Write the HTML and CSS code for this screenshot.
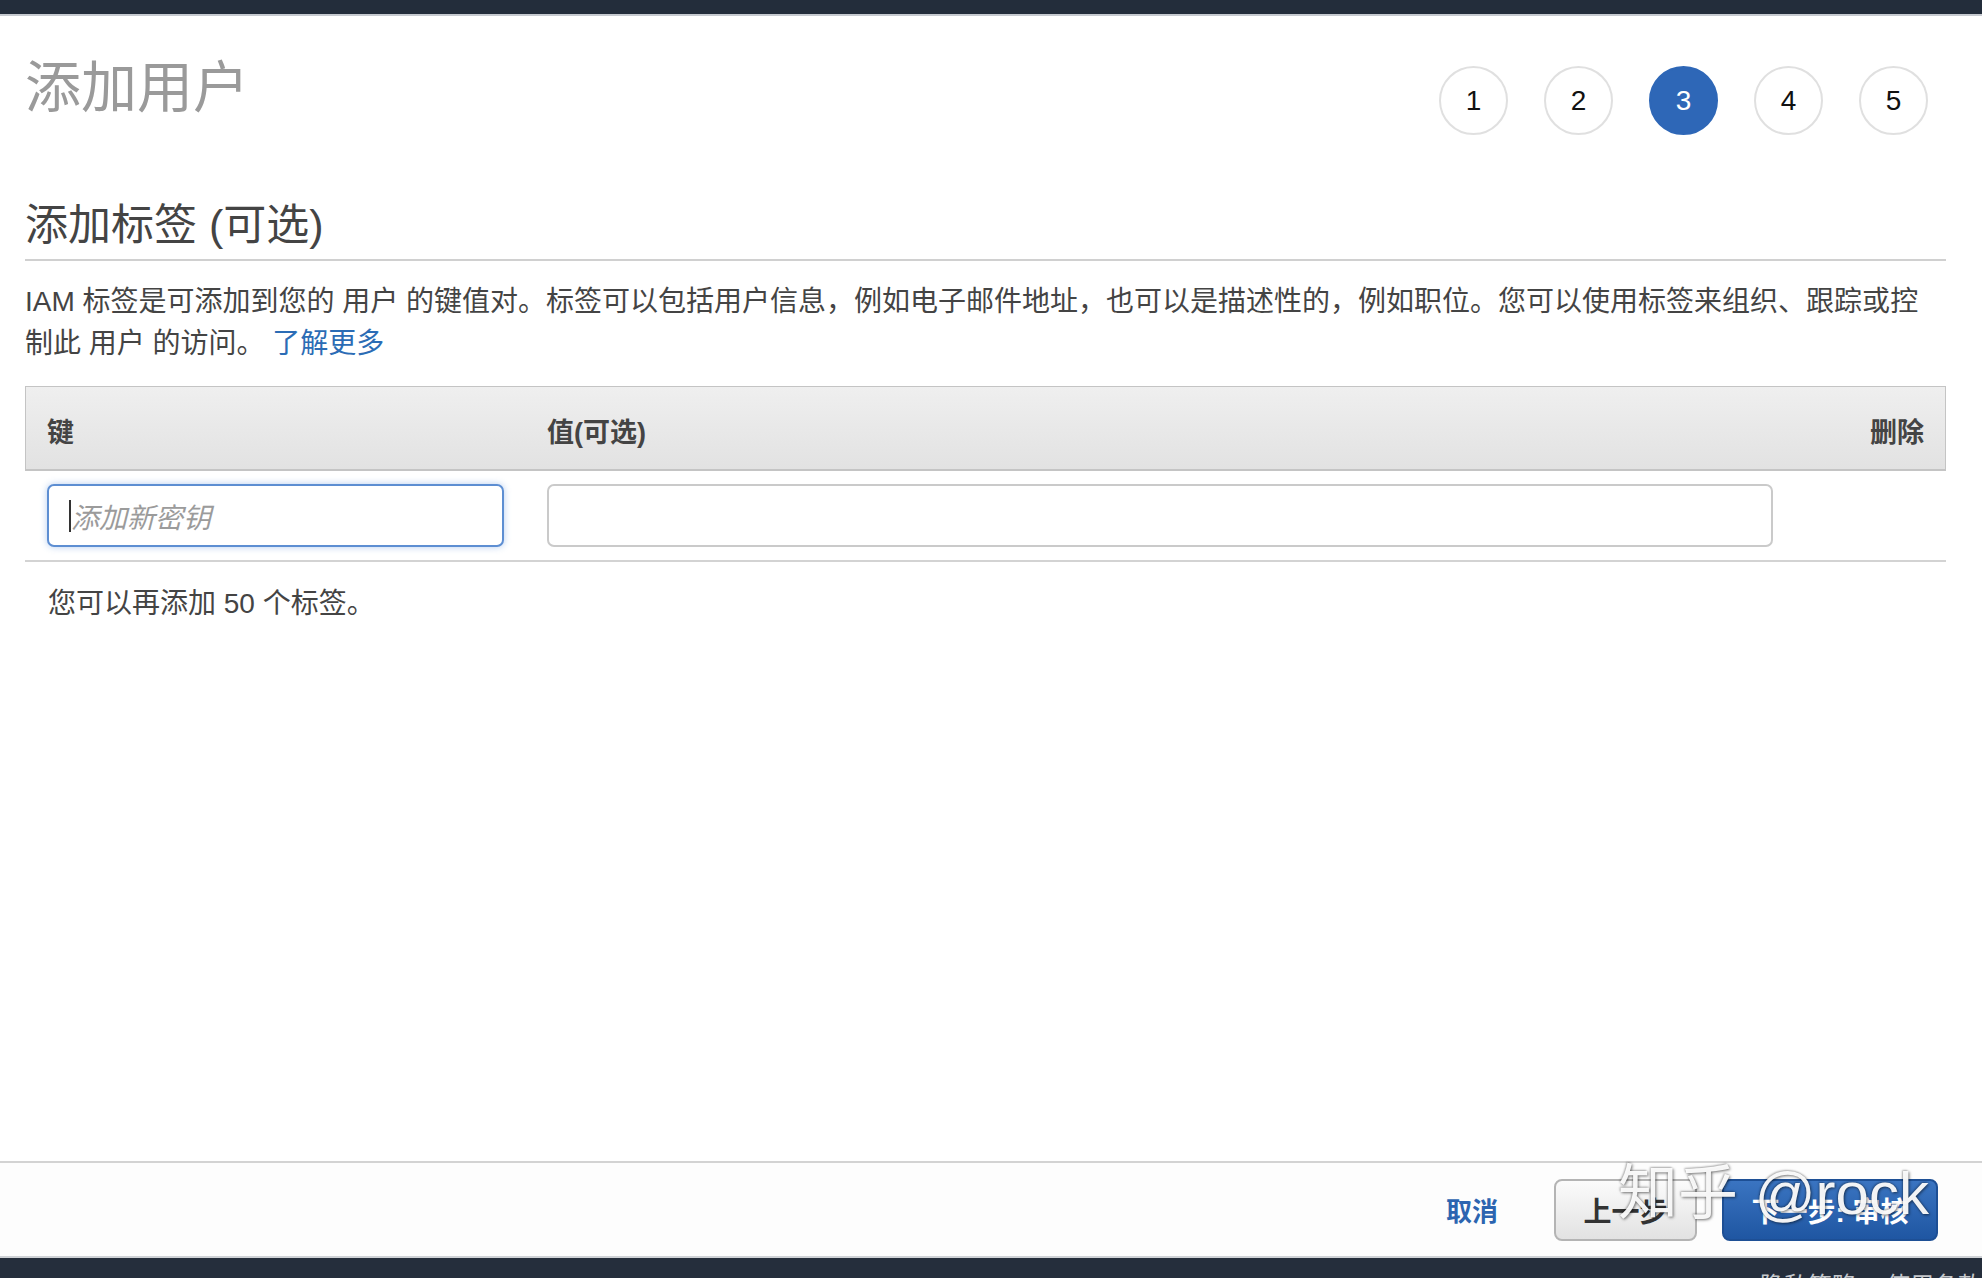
FILE: index.html
```html
<!DOCTYPE html>
<html lang="zh-CN">
<head>
<meta charset="utf-8">
<title>添加用户</title>
<link rel="stylesheet" href="styles.css">
</head>
<body>
<div class="page">
  <div class="topbar"></div>
  <main class="main">
    <div class="header">
      <h1 class="title">添加用户</h1>
      <ol class="steps">
        <li class="step">1</li>
        <li class="step">2</li>
        <li class="step active">3</li>
        <li class="step">4</li>
        <li class="step">5</li>
      </ol>
    </div>
    <h2 class="section-title">添加标签 (可选)</h2>
    <p class="intro">IAM 标签是可添加到您的 用户 的键值对。标签可以包括用户信息，例如电子邮件地址，也可以是描述性的，例如职位。您可以使用标签来组织、跟踪或控<br>制此 用户 的访问。 <a class="link" href="#">了解更多</a></p>
    <div class="tags">
      <div class="tags-head">
        <span>键</span>
        <span>值(可选)</span>
        <span class="del">删除</span>
      </div>
      <div class="tags-row">
        <div class="field focused"><span class="caret"></span><span class="placeholder">添加新密钥</span></div>
        <div class="field"></div>
        <div></div>
      </div>
    </div>
    <p class="remaining">您可以再添加 50 个标签。</p>
  </main>
  <footer class="footer">
    <a class="cancel" href="#">取消</a>
    <button class="btn btn-prev" type="button">上一步</button>
    <button class="btn btn-next" type="button">下一步: 审核</button>
  </footer>
  <div class="bottombar"><span>隐私策略</span><span>使用条款</span></div>
  <div class="watermark">知乎 @rock</div>
</div>
</body>
</html>
```

FILE: styles.css
```css
html, body {
  margin: 0;
  padding: 0;
  height: 1278px;
  overflow: hidden;
  background: #ffffff;
}

body {
  font-family: "Liberation Sans", "Noto Sans CJK SC", sans-serif;
  color: #444;
}

.page {
  position: relative;
  height: 1278px;
  display: flex;
  flex-direction: column;
}

.topbar {
  height: 14px;
  background: #232d3b;
  border-bottom: 2px solid #c6cad0;
  flex: none;
}

.main {
  flex: 1;
  padding: 0 36px 0 25px;
}

.header {
  display: flex;
  justify-content: space-between;
  align-items: flex-start;
}

.title {
  margin: 37px 0 0 0;
  font-size: 56px;
  line-height: 70px;
  font-weight: 400;
  color: #9a9a9a;
}

.steps {
  display: flex;
  gap: 36px;
  list-style: none;
  margin: 50px 18px 0 0;
  padding: 0;
}

.step {
  width: 69px;
  height: 69px;
  box-sizing: border-box;
  border: 2px solid #e0e0e0;
  border-radius: 50%;
  display: flex;
  align-items: center;
  justify-content: center;
  font-size: 28px;
  color: #111;
}

.step.active {
  background: #2e67b7;
  border-color: #2e67b7;
  color: #fff;
}

.section-title {
  margin: 65px 0 0 0;
  font-size: 43px;
  line-height: 50px;
  font-weight: 400;
  color: #444;
  padding-bottom: 9px;
  border-bottom: 2px solid #d0d0d0;
}

.intro {
  margin: 20px 0 0 0;
  font-size: 28px;
  line-height: 42px;
  color: #444;
}

.link {
  color: #2b6cb5;
  text-decoration: none;
}

.tags {
  margin-top: 21px;
}

.tags-head,
.tags-row {
  display: grid;
  grid-template-columns: 457px 1226px 1fr;
  column-gap: 43px;
}

.tags-head {
  box-sizing: border-box;
  height: 85px;
  padding: 4px 21px 0 21px;
  align-items: center;
  border: 1px solid #c4c4c4;
  border-bottom-width: 2px;
  background: linear-gradient(#efefef, #e2e2e2);
  font-size: 27px;
  font-weight: 700;
  color: #444;
}

.tags-head .del {
  text-align: right;
}

.tags-row {
  padding: 13px 0 13px 22px;
  border-bottom: 2px solid #d3d3d3;
}

.field {
  height: 63px;
  box-sizing: border-box;
  border: 2px solid #cacaca;
  border-radius: 7px;
  background: #fff;
  display: flex;
  align-items: center;
  padding-left: 20px;
}

.field.focused {
  border-color: #5d8ed2;
  box-shadow: 0 0 7px rgba(90, 145, 220, 0.45);
}

.caret {
  width: 2px;
  height: 32px;
  background: #333;
  flex: none;
}

.placeholder {
  font-size: 28px;
  font-style: italic;
  color: #9b9b9b;
}

.remaining {
  margin: 21px 0 0 0;
  padding-left: 23px;
  font-size: 28px;
  line-height: 42px;
  color: #444;
}

.footer {
  flex: none;
  height: 97px;
  box-sizing: border-box;
  border-top: 2px solid #d3d3d3;
  border-bottom: 2px solid #cfd2d6;
  background: #fdfdfd;
  display: flex;
  justify-content: flex-end;
  align-items: center;
  padding-right: 44px;
}

.cancel {
  font-size: 26px;
  font-weight: 700;
  color: #2c64b0;
  text-decoration: none;
  margin-right: 56px;
}

.btn {
  height: 62px;
  box-sizing: border-box;
  border-radius: 8px;
  font-family: "Liberation Sans", "Noto Sans CJK SC", sans-serif;
  font-size: 28px;
  font-weight: 700;
  padding: 0;
}

.btn-prev {
  width: 143px;
  margin-right: 25px;
  border: 2px solid #b4b4b4;
  background: linear-gradient(#fbfbfb, #e2e2e2);
  color: #333;
}

.btn-next {
  width: 216px;
  border: 2px solid #1d4f95;
  background: linear-gradient(#3a74c1, #1f56a2);
  color: #fff;
}

.bottombar {
  flex: none;
  height: 20px;
  background: #252e3c;
  overflow: hidden;
  display: flex;
  justify-content: flex-end;
  gap: 30px;
  padding-top: 15px;
  box-sizing: border-box;
  font-size: 24px;
  line-height: 26px;
  color: #c5c8cc;
}

.watermark {
  position: absolute;
  left: 1618px;
  top: 1164px;
  font-size: 60px;
  line-height: 1;
  color: rgba(255, 255, 255, 0.94);
  text-shadow: 1px 1px 3px rgba(0, 0, 0, 0.55), -1px -1px 2px rgba(0, 0, 0, 0.25);
  white-space: nowrap;
  pointer-events: none;
}
```
